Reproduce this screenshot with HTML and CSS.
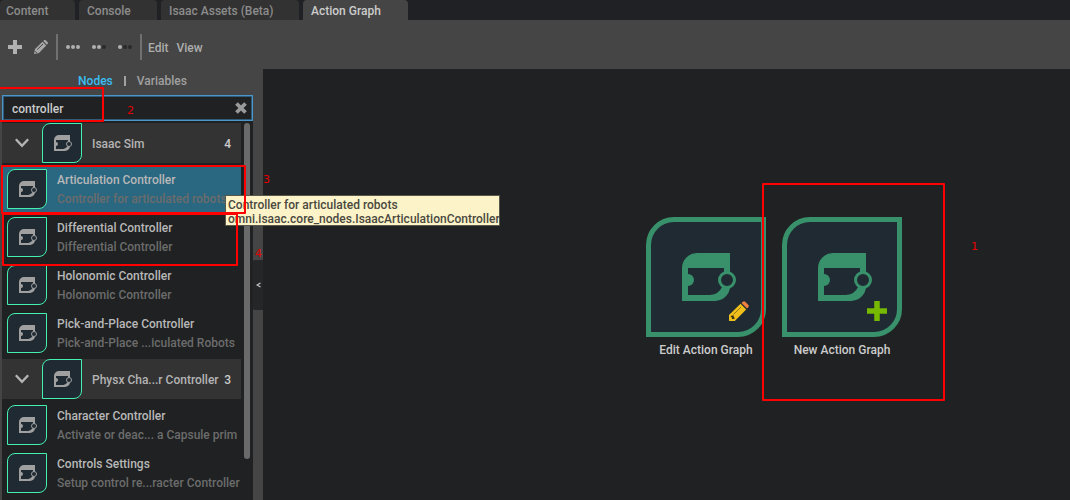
FILE: index.html
```html
<!DOCTYPE html>
<html lang="en">
<head>
<meta charset="utf-8">
<title>Action Graph</title>
<link rel="stylesheet" href="styles.css">
</head>
<body>
<svg class="defs" width="0" height="0" aria-hidden="true">
  <symbol id="node" viewBox="0 0 54 48">
    <path fill="currentColor" fill-rule="evenodd" d="M0 48V15A15 15 0 0 1 15 0H48V33A15 15 0 0 1 33 48ZM6 15V21A6 6 0 0 1 6 33V42H28Q37 41 40 34L42 28V15Z"/>
    <circle class="node-port" cx="45" cy="27" r="7.5" stroke="currentColor" stroke-width="3"/>
  </symbol>
  <symbol id="chevron" viewBox="0 0 14 10">
    <path d="M.8 1.2L7 7.8L13.2 1.2" fill="none" stroke="currentColor" stroke-width="2.4"/>
  </symbol>
</svg>
<nav class="tabs">
  <button class="tab tab-content">Content</button>
  <button class="tab tab-console">Console</button>
  <button class="tab tab-assets">Isaac Assets (Beta)</button>
  <button class="tab tab-graph active">Action Graph</button>
</nav>
<header class="toolbar">
  <button class="tool" aria-label="Add"><svg width="14" height="14" viewBox="0 0 14 14"><path d="M7 0V14M0 7H14" stroke="#b0b0b0" stroke-width="4"/></svg></button>
  <button class="tool tool-edit" aria-label="Edit graph"><svg width="14" height="14" viewBox="0 0 14 14"><path fill="#a8a8a8" d="M0 14L1 9L8.5 1.8L12.2 5.5L5 13ZM9.3 1L10.3 0Q11 -.4 11.8 .3L13.7 2.2Q14.3 3 13.7 3.7L12.9 4.7Z"/><path d="M3.2 9.6L9 4M1 11.2L2.8 13" stroke="#454545"/></svg></button>
  <span class="rule"></span>
  <button class="tool tool-dots" aria-label="Three dots"><svg width="14" height="4" viewBox="0 0 14 4"><g fill="#b0b0b0"><circle cx="2" cy="2" r="2"/><circle cx="7" cy="2" r="2"/><circle cx="12" cy="2" r="2"/></g></svg></button>
  <button class="tool tool-dots" aria-label="Two dots"><svg width="14" height="4" viewBox="0 0 14 4"><g fill="#b0b0b0"><circle cx="2" cy="2" r="2"/><circle cx="7" cy="2" r="2"/></g><circle cx="12" cy="2" r="2" fill="#2b2b2b"/></svg></button>
  <button class="tool tool-dots" aria-label="One dot"><svg width="14" height="4" viewBox="0 0 14 4"><circle cx="2" cy="2" r="2" fill="#b0b0b0"/><g fill="#2b2b2b"><circle cx="7" cy="2" r="2"/><circle cx="12" cy="2" r="2"/></g></svg></button>
  <span class="rule"></span>
  <button class="menu">Edit</button>
  <button class="menu">View</button>
</header>
<main class="work">
  <aside class="side">
    <div class="modes">
      <button class="mode on">Nodes</button><span class="mode-rule"></span><button class="mode">Variables</button>
    </div>
    <div class="search">
      <input class="search-text" type="text" value="controller" aria-label="Search nodes">
      <button class="clear" aria-label="Clear"><svg width="12" height="12" viewBox="0 0 12 12"><path d="M1.5 1.5L10.5 10.5M10.5 1.5L1.5 10.5" stroke="#9a9a9a" stroke-width="3.8"/></svg></button>
    </div>
    <div class="catalog">
      <div class="list">
        <button class="group"><svg class="chevron" width="14" height="10"><use href="#chevron"/></svg><span class="tile"><svg class="glyph"><use href="#node"/></svg></span><span class="group-name">Isaac Sim</span><span class="count">4</span></button>
        <div class="items">
          <div class="item selected"><span class="tile"><svg class="glyph"><use href="#node"/></svg></span><div class="label"><div class="name">Articulation Controller</div><div class="info">Controller for articulated robots</div></div></div>
          <div class="item"><span class="tile"><svg class="glyph"><use href="#node"/></svg></span><div class="label"><div class="name">Differential Controller</div><div class="info">Differential Controller</div></div></div>
          <div class="item"><span class="tile"><svg class="glyph"><use href="#node"/></svg></span><div class="label"><div class="name">Holonomic Controller</div><div class="info">Holonomic Controller</div></div></div>
          <div class="item"><span class="tile"><svg class="glyph"><use href="#node"/></svg></span><div class="label"><div class="name">Pick-and-Place Controller</div><div class="info">Pick-and-Place ...iculated Robots</div></div></div>
        </div>
        <button class="group"><svg class="chevron" width="14" height="10"><use href="#chevron"/></svg><span class="tile"><svg class="glyph"><use href="#node"/></svg></span><span class="group-name">Physx Cha...r Controller</span><span class="count">3</span></button>
        <div class="items">
          <div class="item"><span class="tile"><svg class="glyph"><use href="#node"/></svg></span><div class="label"><div class="name">Character Controller</div><div class="info">Activate or deac... a Capsule prim</div></div></div>
          <div class="item"><span class="tile"><svg class="glyph"><use href="#node"/></svg></span><div class="label"><div class="name">Controls Settings</div><div class="info">Setup control re...racter Controller</div></div></div>
        </div>
      </div>
      <div class="scroll"><div class="thumb"></div></div>
    </div>
  </aside>
  <div class="splitter"><button class="collapse" aria-label="Collapse panel"><svg width="5" height="6" viewBox="0 0 5 6"><path d="M4.5 1L1 3L4.5 5" fill="none" stroke="#c8c8c8" stroke-width="1.2"/></svg></button></div>
  <section class="canvas">
    <button class="card"><span class="card-tile"><svg width="54" height="48"><use href="#node"/></svg><svg class="badge badge-edit" width="20" height="20" viewBox="0 0 20 20"><path fill="#efc01c" d="M0 20V14L11.5 2.8L17.2 8.5L5.8 20Z"/><path fill="#f08040" d="M12.5 2L13.8 .8Q15 -.3 16.2 .8L19.2 3.8Q20.3 5 19.2 6.2L18 7.5Z"/><path d="M4.5 13.5L12 6" stroke="#7a6518" stroke-width=".8"/><path d="M2 15L5.5 17.5M3.5 18L4.2 14.5" stroke="#35300f" stroke-width="1.5"/></svg></span><span>Edit Action Graph</span></button>
    <button class="card"><span class="card-tile"><svg width="54" height="48"><use href="#node"/></svg><svg class="badge" width="20" height="20" viewBox="0 0 20 20"><path d="M10 0V20M0 10H20" stroke="#76b900" stroke-width="5.5"/></svg></span><span>New Action Graph</span></button>
  </section>
</main>
<div class="tooltip" role="tooltip">Controller for articulated robots<br>omni.isaac.core_nodes.IsaacArticulationController</div>
<div class="mark mark-new"></div>
<div class="mark mark-search"></div>
<div class="mark mark-articulation"></div>
<div class="mark mark-differential"></div>
<span class="step step-1">1</span>
<span class="step step-2">2</span>
<span class="step step-3">3</span>
<span class="step step-4">4</span>
</body>
</html>
```
FILE: styles.css
```css
* { box-sizing: border-box; }
body {
  margin: 0;
  position: relative;
  height: 100vh;
  display: flex;
  flex-direction: column;
  overflow: hidden;
  background: #454545;
  color: #b4b4b4;
  font: 500 12px/19px Roboto, sans-serif;
}
button {
  margin: 0;
  padding: 0;
  border: 0;
  background: none;
  color: inherit;
  font: inherit;
  white-space: nowrap;
}
svg { display: block; flex: none; }
.defs { position: absolute; }
.tabs { display: flex; gap: 4px; height: 20px; flex: none; background: #1f2124; }
.tab {
  padding: 2px 8px 0;
  border-radius: 4px 4px 0 0;
  background: #323232;
  color: #8c8c8c;
  text-align: left;
  line-height: 18px;
}
.tab-content { width: 75px; padding-left: 6px; }
.tab-console { width: 78px; }
.tab-assets { width: 138px; }
.tab-graph { width: 105px; }
.tab.active { background: #454545; color: #cccccc; }
.toolbar { display: flex; align-items: center; height: 49px; flex: none; padding: 5px 8px 0; }
.tool-edit { margin: 0 8px 0 12px; }
.tool-dots { margin-left: 12px; }
.rule { width: 2px; height: 26px; background: #707070; }
.rule + .tool-dots { margin-left: 8px; }
.tool-dots + .rule { margin-left: 8px; }
.menu { margin-left: 6px; padding-top: 2px; color: #adadad; }
.menu + .menu { margin-left: 8px; }
.work { display: flex; flex: 1; min-height: 0; }
.side { display: flex; flex-direction: column; width: 253px; flex: none; padding-left: 2px; }
.modes { display: flex; align-items: center; justify-content: center; gap: 11px; height: 26px; padding: 0 0 2px 10px; color: #a0a0a0; }
.mode.on { color: #3cbcf0; }
.mode-rule { width: 2px; height: 10px; background: #a0a0a0; }
.search {
  display: flex;
  align-items: center;
  height: 26px;
  flex: none;
  padding: 0 5px 0 9px;
  border: 1px solid #4b95c9;
  box-shadow: inset 0 0 0 1px #2f5c7c;
  background: #1f2123;
}
.search-text {
  flex: 1;
  min-width: 0;
  padding: 2px 0 0;
  border: 0;
  outline: 0;
  background: none;
  color: #cccccc;
  font: inherit;
}
.catalog { display: flex; flex: 1; min-height: 0; padding: 2px 0 0; gap: 3px; background: #1f2122; overflow: hidden; }
.list { display: flex; flex-direction: column; gap: 2px; width: 239px; flex: none; }
.group { display: flex; align-items: center; height: 40px; flex: none; padding: 0 10px 0 13px; background: #333333; }
.chevron { margin-right: 13px; color: #b4b4b4; }
.group-name { flex: 1; margin-left: 10px; padding-top: 2px; text-align: left; }
.count { padding-top: 2px; color: #cccccc; }
.tile {
  display: flex;
  align-items: center;
  justify-content: center;
  width: 40px;
  height: 40px;
  flex: none;
  border: 1px solid #45f0ae;
  border-radius: 8px 0;
  background: #1f2a33;
  color: #a0a0a0;
}
.glyph { width: 18px; height: 16px; margin-left: 2px; }
.node-port { fill: #1f2a33; }
.item { display: flex; gap: 10px; height: 48px; padding: 4px 5px; white-space: nowrap; }
.item.selected { background: #2a6780; }
.label { padding-top: 2px; }
.name { color: #b8b8b8; }
.info { color: #6c6c6c; }
.scroll { width: 6px; flex: none; }
.thumb { height: 336px; border-radius: 3px; background: #6a6a6a; }
.splitter { display: flex; width: 10px; flex: none; padding-top: 191px; }
.collapse { display: flex; align-items: center; justify-content: center; width: 10px; height: 50px; background: #252627; border-radius: 2px 0 0 2px; }
.canvas { display: flex; flex: 1; align-items: flex-start; justify-content: center; gap: 16px; padding: 148px 0 0 215px; background: #1f2122; }
.card { display: flex; flex-direction: column; align-items: center; gap: 4px; color: #cccccc; }
.card-tile {
  position: relative;
  display: flex;
  align-items: center;
  justify-content: center;
  width: 120px;
  height: 120px;
  padding-left: 6px;
  border: 5px solid #38916a;
  border-radius: 28px 0;
  background: #1f2a33;
  color: #38916a;
}
.badge { position: absolute; right: 10px; bottom: 11px; }
.badge-edit { right: 12px; }
.tooltip {
  position: absolute;
  left: 225px;
  top: 195px;
  padding: 2px 0 0 2px;
  width: 275px;
  height: 31px;
  border: 1px solid #59564a;
  background: #fcf4c8;
  color: #4a4840;
  line-height: 14px;
  white-space: nowrap;
}
.mark { position: absolute; border: 2px solid #ff0000; border-radius: 1px; pointer-events: none; }
.mark-new { left: 762px; top: 183px; width: 183px; height: 218px; }
.mark-search { left: -2px; top: 87px; width: 106px; height: 35px; }
.mark-articulation { left: 1px; top: 165px; width: 245px; height: 49px; }
.mark-differential { left: 2px; top: 213px; width: 236px; height: 53px; }
.step { position: absolute; color: #e60000; font: 11px/14px "DejaVu Sans", sans-serif; }
.step-1 { left: 971px; top: 240px; }
.step-2 { left: 127px; top: 104px; }
.step-3 { left: 263px; top: 173px; }
.step-4 { left: 255px; top: 247px; }
```
